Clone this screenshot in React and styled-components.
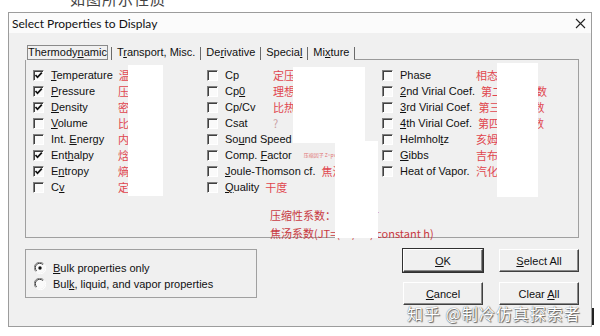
import React from 'react';
import styled, { createGlobalStyle, css } from 'styled-components';

const GlobalStyle = createGlobalStyle`
  html, body {
    margin: 0;
    padding: 0;
    background: #fff;
  }
  body {
    width: 600px;
    height: 336px;
    overflow: hidden;
    font-family: "Liberation Sans", Arial, sans-serif;
  }
`;

const Page = styled.div`
  position: relative;
  width: 600px;
  height: 336px;
  background: #fff;
`;

// bottom of a caption cut off by the screenshot edge
const TopStrip = styled.div`
  height: 12px;
  overflow: hidden;
  padding-left: 70px;

  span {
    display: block;
    margin-top: -10px;
    font: 15px/18px "Noto Sans CJK SC", sans-serif;
    letter-spacing: 1px;
    color: #444;
  }
`;

const Dialog = styled.div`
  margin-left: 8px;
  width: 584px;
  height: 315px;
  box-sizing: border-box;
  border: 1px solid #9c9c9c;
  background: #f0f0f0;
  display: flex;
  flex-direction: column;
`;

const TitleBar = styled.div`
  height: 20px;
  background: #fbfbfb;
  display: flex;
  align-items: center;
  justify-content: space-between;
  padding: 0 5px 0 3px;
  font: 12px "Lato", "Liberation Sans", sans-serif;
  color: #111;
`;

const Body = styled.div`
  flex: 1;
  padding: 12px 12px 0 16px;
`;

const TabRow = styled.div`
  display: flex;
  height: 15px;
  padding-left: 2px;
  font-size: 11px;
  color: #111;
`;

const Tab = styled.div`
  white-space: nowrap;
  ${p => p.$active
    ? css`
      border: 1px solid #8a8a8a;
      line-height: 13px;
      margin-right: 3px;
    `
    : css`
      margin-top: 2px;
      height: 13px;
      line-height: 11px;
      border-left: 1px solid #6a6a6a;
      padding: 0 5px;
    `}
`;

const TabFiller = styled.div`
  flex: 1;
  margin-top: 2px;
  border-left: 1px solid #6a6a6a;
  border-bottom: 1px solid #9a9a9a;
`;

const Panel = styled.div`
  height: 178px;
  box-sizing: border-box;
  border: 1px solid #a0a0a0;
  border-top: none;
`;

const Columns = styled.div`
  display: grid;
  grid-template-columns: 174px 175px 1fr;
  padding: 7px 0 0 7px;
`;

const Column = styled.div`
  display: flex;
  flex-direction: column;
`;

const Row = styled.div`
  display: flex;
  align-items: center;
  height: 16px;
  font-size: 11px;
  color: #111;
  white-space: nowrap;
`;

const Label = styled.span`
  min-width: ${p => p.$min}px;
  margin-left: 7px;
`;

const Annot = styled.span`
  margin-left: 6px;
  font: 11px/16px "Noto Sans CJK SC", sans-serif;
  color: #e0464e;
  ${p => p.$tiny && css`
    margin-left: 12px;
    font-size: 5px;
    color: #e07070;
  `}
  ${p => p.$faint && css`
    color: #c9a0a4;
  `}
`;

const Box = styled.span`
  position: relative;
  flex: none;
  width: 9px;
  height: 9px;
  border-top: 1px solid #808080;
  border-left: 1px solid #808080;
  border-right: 1px solid #fff;
  border-bottom: 1px solid #fff;
  box-shadow: inset 1px 1px 0 #404040;
  background: #fafafa;

  svg {
    position: absolute;
    left: 0;
    top: 0;
  }
`;

const Remark = styled.div`
  margin: 11px 0 0 244px;
  font: 11px/18px "Noto Sans CJK SC", sans-serif;
  color: #c83a42;
  white-space: nowrap;
`;

const BottomRow = styled.div`
  display: flex;
  justify-content: space-between;
  align-items: flex-start;
  margin-top: 11px;
`;

const GroupBox = styled.div`
  width: 232px;
  height: 49px;
  box-sizing: border-box;
  border: 1px solid #a0a0a0;
  padding: 10px 0 0 8px;
`;

const Buttons = styled.div`
  display: grid;
  grid-template-columns: 80px 80px;
  column-gap: 16px;
  row-gap: 10px;
`;

const Button = styled.button`
  width: 80px;
  height: 23px;
  padding: 0;
  font: 11px "Liberation Sans", Arial, sans-serif;
  color: #111;
  background: #f0f0f0;
  border: 1px solid;
  border-color: #fff #404040 #404040 #fff;
  box-shadow: inset -1px -1px 0 #8a8a8a;
  ${p => p.$default && css`
    outline: 1px solid #303030;
  `}
`;

const Patch = styled.div`
  position: absolute;
  left: ${p => p.$x}px;
  top: ${p => p.$y}px;
  width: ${p => p.$w}px;
  height: ${p => p.$h}px;
  background: #fff;
`;

const Watermark = styled.div`
  position: absolute;
  left: 407px;
  top: 303px;
  font: 16px/20px "Noto Sans CJK SC", sans-serif;
  letter-spacing: 1px;
  color: #fff;
  text-shadow: 0 0 1px #444, 1px 1px 1px #666;
  white-space: nowrap;
`;

const EdgeMark = styled.div`
  position: absolute;
  left: 592px;
  top: 308px;
  width: 2px;
  height: 17px;
  background: #222;
`;

function CloseIcon() {
  return (
    <svg width="11" height="11" viewBox="0 0 11 11">
      <path d="M1 1 L10 10 M10 1 L1 10" stroke="#222" strokeWidth="1.1" fill="none" />
    </svg>
  );
}

function CheckBox({ checked }) {
  return (
    <Box>
      {checked && (
        <svg width="9" height="9" viewBox="0 0 9 9">
          <path d="M1.5 4 L3.5 6.3 L7.8 1.6" stroke="#111" strokeWidth="1.7" fill="none" />
        </svg>
      )}
    </Box>
  );
}

function Radio({ checked }) {
  return (
    <svg width="12" height="12" viewBox="0 0 12 12" style={{ flex: 'none' }}>
      <circle cx="6" cy="6" r="5" fill="#fafafa" />
      <path d="M1.8 9.5 A5 5 0 0 1 9.5 1.8" stroke="#808080" fill="none" />
      <path d="M2.6 8.8 A4 4 0 0 1 8.8 2.6" stroke="#404040" fill="none" />
      <path d="M10.2 2.5 A5 5 0 0 1 2.5 10.2" stroke="#fff" fill="none" />
      {checked && <circle cx="6" cy="6" r="1.7" fill="#111" />}
    </svg>
  );
}

const columns = [
  {
    min: 61,
    rows: [
      { label: <><u>T</u>emperature</>, checked: true, note: '温度' },
      { label: <><u>P</u>ressure</>, checked: true, note: '压力' },
      { label: <><u>D</u>ensity</>, checked: true, note: '密度' },
      { label: <><u>V</u>olume</>, note: '比容' },
      { label: <>Int. <u>E</u>nergy</>, note: '内能' },
      { label: <>Ent<u>h</u>alpy</>, checked: true, note: '焓' },
      { label: <>E<u>n</u>tropy</>, checked: true, note: '熵' },
      { label: <>C<u>v</u></>, note: '定容比热' },
    ],
  },
  {
    min: 42,
    rows: [
      { label: <>Cp</>, note: '定压比热' },
      { label: <>Cp<u>0</u></>, note: '理想气体比热' },
      { label: <>Cp/Cv</>, note: '比热比' },
      { label: <>Csat</>, note: '?', faint: true },
      { label: <>So<u>u</u>nd Speed</> },
      { label: <>Comp. <u>F</u>actor</>, note: '压缩因子 Z=pv/RT', tiny: true },
      { label: <><u>J</u>oule-Thomson cf.</>, note: '焦汤系数' },
      { label: <><u>Q</u>uality</>, note: '干度', min: 0 },
    ],
  },
  {
    min: 70,
    rows: [
      { label: <>Phase</>, note: '相态' },
      { label: <><u>2</u>nd Virial Coef.</>, note: '第二维里系数' },
      { label: <><u>3</u>rd Virial Coef.</>, note: '第三维里系数' },
      { label: <><u>4</u>th Virial Coef.</>, note: '第四维里系数' },
      { label: <>Helmhol<u>t</u>z</>, note: '亥姆霍兹能' },
      { label: <><u>G</u>ibbs</>, note: '吉布斯函数' },
      { label: <>Heat of Vapor.</>, note: '汽化潜热' },
    ],
  },
];

// white boxes pasted over the screenshot
const patches = [
  { x: 128, y: 65, w: 35, h: 131 },
  { x: 293, y: 67, w: 72, h: 76 },
  { x: 335, y: 141, w: 43, h: 97 },
  { x: 497, y: 63, w: 41, h: 134 },
];

export default function App() {
  return (
    <Page>
      <GlobalStyle />
      <TopStrip><span>如图所示性质</span></TopStrip>
      <Dialog>
        <TitleBar>
          <span>Select Properties to Display</span>
          <CloseIcon />
        </TitleBar>
        <Body>
          <TabRow>
            <Tab $active>Thermody<u>n</u>amic</Tab>
            <Tab>T<u>r</u>ansport, Misc.</Tab>
            <Tab>De<u>r</u>ivative</Tab>
            <Tab>Specia<u>l</u></Tab>
            <Tab>Mi<u>x</u>ture</Tab>
            <TabFiller />
          </TabRow>
          <Panel>
            <Columns>
              {columns.map((col, i) => (
                <Column key={i}>
                  {col.rows.map((r, j) => (
                    <Row key={j}>
                      <CheckBox checked={r.checked} />
                      <Label $min={r.min ?? col.min}>{r.label}</Label>
                      {r.note && <Annot $tiny={r.tiny} $faint={r.faint}>{r.note}</Annot>}
                    </Row>
                  ))}
                </Column>
              ))}
            </Columns>
            <Remark>
              <div>压缩性系数：Z=pv/RT</div>
              <div>焦汤系数(JT=(dT/dP) constant h)</div>
            </Remark>
          </Panel>
          <BottomRow>
            <GroupBox>
              <Row>
                <Radio checked />
                <Label $min={0}><u>B</u>ulk properties only</Label>
              </Row>
              <Row>
                <Radio />
                <Label $min={0}>Bul<u>k</u>, liquid, and vapor properties</Label>
              </Row>
            </GroupBox>
            <Buttons>
              <Button $default><u>O</u>K</Button>
              <Button><u>S</u>elect All</Button>
              <Button><u>C</u>ancel</Button>
              <Button>Clear <u>A</u>ll</Button>
            </Buttons>
          </BottomRow>
        </Body>
      </Dialog>
      {patches.map((p, i) => (
        <Patch key={i} $x={p.x} $y={p.y} $w={p.w} $h={p.h} />
      ))}
      <Watermark>知乎 @制冷仿真探索者</Watermark>
      <EdgeMark />
    </Page>
  );
}
